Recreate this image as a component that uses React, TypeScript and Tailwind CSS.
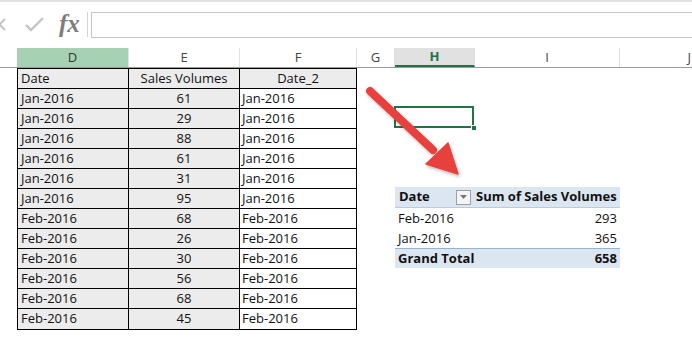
const rows: [string, number, string][] = [
  ['Jan-2016', 61, 'Jan-2016'],
  ['Jan-2016', 29, 'Jan-2016'],
  ['Jan-2016', 88, 'Jan-2016'],
  ['Jan-2016', 61, 'Jan-2016'],
  ['Jan-2016', 31, 'Jan-2016'],
  ['Jan-2016', 95, 'Jan-2016'],
  ['Feb-2016', 68, 'Feb-2016'],
  ['Feb-2016', 26, 'Feb-2016'],
  ['Feb-2016', 30, 'Feb-2016'],
  ['Feb-2016', 56, 'Feb-2016'],
  ['Feb-2016', 68, 'Feb-2016'],
  ['Feb-2016', 45, 'Feb-2016'],
];

function FormulaBar() {
  return (
    <div className="h-[48px] border-t-2 border-[#e1e1e1] flex items-start pt-[10px]">
      <div className="w-[88px] h-[25px] flex items-center relative">
        {/* cancel icon, cut at the window edge */}
        <svg className="absolute left-[-8px] top-[5px]" width="15" height="15" viewBox="0 0 15 15">
          <path d="M2 2 L13 13 M13 2 L2 13" stroke="#c4c4c4" strokeWidth="2" fill="none" />
        </svg>
        <svg className="absolute left-[25px] top-[5px]" width="19" height="15" viewBox="0 0 19 15">
          <path d="M1 8 L6 13 L18 1" stroke="#c4c4c4" strokeWidth="2.4" fill="none" />
        </svg>
        <span
          className="absolute left-[59px] top-[-3px] text-[25px] leading-[30px] italic font-bold text-[#7d7d7d]"
          style={{ fontFamily: '"Liberation Serif", serif' }}
        >
          fx
        </span>
        <div className="absolute right-0 top-0 h-[25px] w-px bg-[#d4d4d4]" />
      </div>
      <div className="ml-[3px] flex-1 h-[26px] border border-[#c6c6c6] border-r-0" />
    </div>
  );
}

function ColumnHeaders() {
  const cols = [
    { l: 'D', w: 'w-[112px]', cls: 'bg-[#a6d2b3] text-[#333]' },
    { l: 'E', w: 'w-[111px]', cls: 'text-[#444]' },
    { l: 'F', w: 'w-[117px]', cls: 'text-[#444]' },
    { l: 'G', w: 'w-[38px]', cls: 'text-[#444]' },
    { l: 'H', w: 'w-[80px]', cls: 'bg-[#e1e1e1] text-[#217346] font-bold border-b-2 border-b-[#217346]' },
    { l: 'I', w: 'w-[145px]', cls: 'text-[#444]' },
  ];
  return (
    <div className="flex h-[20px] border-b border-[#9b9b9b]">
      <div className="w-[17px] shrink-0" />
      {cols.map((c) => (
        <div
          key={c.l}
          className={`${c.w} shrink-0 h-[19px] flex items-center justify-center border-r border-[#e0e0e0] text-[13px] ${c.cls}`}
        >
          {c.l}
        </div>
      ))}
      <div className="flex-1 h-[19px] flex items-center justify-end pr-[1px] text-[13px] text-[#444]">J</div>
    </div>
  );
}

function DataTable() {
  return (
    <div className="w-[340px] shrink-0 border border-black">
      <div className="flex h-[20px] border-b border-black bg-[#ececec]">
        <div className="w-[111px] border-r border-black pl-[3px] leading-[19px]">Date</div>
        <div className="w-[111px] border-r border-black text-center leading-[19px]">Sales Volumes</div>
        <div className="flex-1 text-center leading-[19px]">Date_2</div>
      </div>
      {rows.map(([d, v, d2], i) => (
        <div key={i} className={`flex h-[20px] ${i < rows.length - 1 ? 'border-b border-black' : 'h-[19px]'}`}>
          <div className="w-[111px] border-r border-black pl-[3px] leading-[19px] bg-[#ececec]">{d}</div>
          <div className="w-[111px] border-r border-black text-center leading-[19px] bg-[#ececec]">{v}</div>
          <div className="flex-1 pl-[2px] leading-[19px] bg-white">{d2}</div>
        </div>
      ))}
    </div>
  );
}

function Pivot() {
  return (
    <div className="w-[225px] mt-[119px] text-[#111]">
      <div className="flex items-center h-[21px] bg-[#dce6f1] border-b border-[#b8cce4] font-bold">
        <span className="pl-[4px] w-[61px]">Date</span>
        <span className="w-[15px] h-[15px] border border-[#a0a0a0] bg-[#f4f4f4] flex items-center justify-center">
          <svg width="7" height="4" viewBox="0 0 7 4">
            <path d="M0 0 H7 L3.5 4 Z" fill="#777" />
          </svg>
        </span>
        <span className="ml-[5px]">Sum of Sales Volumes</span>
      </div>
      <div className="flex justify-between h-[20px] leading-[20px] px-[3px]">
        <span>Feb-2016</span>
        <span>293</span>
      </div>
      <div className="flex justify-between h-[20px] leading-[20px] px-[3px]">
        <span>Jan-2016</span>
        <span>365</span>
      </div>
      <div className="flex justify-between h-[20px] leading-[19px] px-[3px] bg-[#dce6f1] border-t border-[#95b3d7] font-bold">
        <span>Grand Total</span>
        <span>658</span>
      </div>
    </div>
  );
}

export default function App() {
  return (
    <div
      className="w-[692px] h-[345px] bg-white overflow-hidden relative text-[13px] text-[#111]"
      style={{ fontFamily: '"Open Sans", "Liberation Sans", sans-serif' }}
    >
      <FormulaBar />
      <ColumnHeaders />
      <div className="flex">
        <div className="w-[17px] shrink-0" />
        <DataTable />
        <div className="w-[38px] shrink-0" />
        <Pivot />
      </div>

      {/* active cell H */}
      <div className="absolute left-[394px] top-[106px] w-[80px] h-[22px] border-2 border-[#217346]" />
      <div className="absolute left-[471px] top-[125px] w-[6px] h-[6px] bg-[#217346] border border-white" />

      {/* red arrow */}
      <svg className="absolute left-0 top-0 pointer-events-none" width="692" height="345" viewBox="0 0 692 345">
        <defs>
          <filter id="sh" x="-20%" y="-20%" width="140%" height="140%">
            <feDropShadow dx="1" dy="2" stdDeviation="1.5" floodColor="#000" floodOpacity="0.25" />
          </filter>
        </defs>
        <g filter="url(#sh)">
          <line x1="370" y1="91" x2="433" y2="150" stroke="#e8413c" strokeWidth="8" strokeLinecap="round" />
          <path d="M426 164 L448 143 L458 174 Z" fill="#e8413c" stroke="#e8413c" strokeWidth="1.5" strokeLinejoin="round" />
        </g>
      </svg>
    </div>
  );
}
